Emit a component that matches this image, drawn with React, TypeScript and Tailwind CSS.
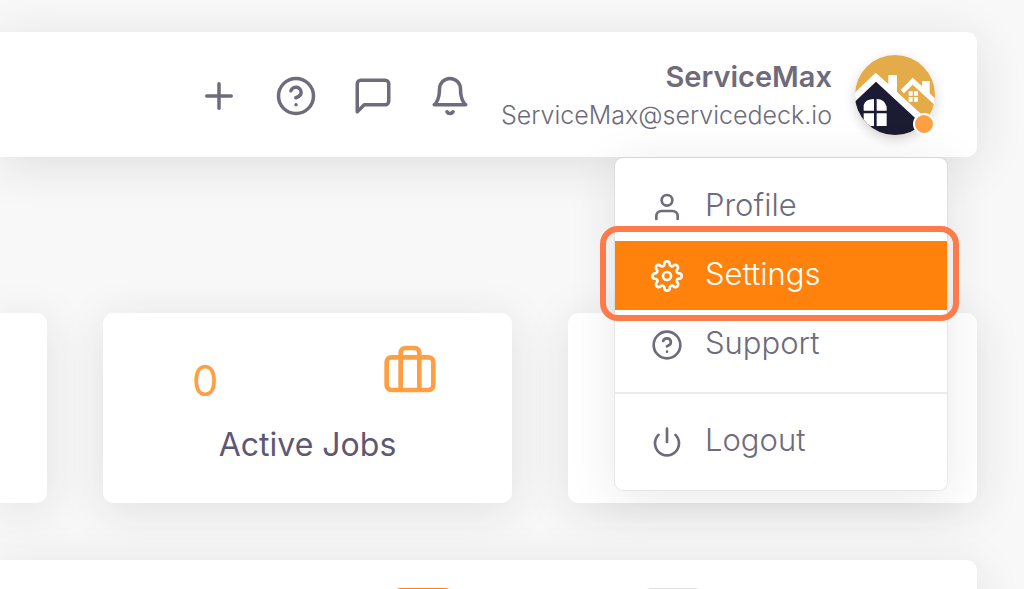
import type { ReactNode } from "react";
import type { IconType } from "react-icons";
import {
  FiBell,
  FiBriefcase,
  FiHelpCircle,
  FiMessageSquare,
  FiPlus,
  FiPower,
  FiSettings,
  FiUser,
} from "react-icons/fi";

const actions: { label: string; icon: IconType }[] = [
  { label: "Add", icon: FiPlus },
  { label: "Help", icon: FiHelpCircle },
  { label: "Messages", icon: FiMessageSquare },
  { label: "Notifications", icon: FiBell },
];

function Avatar() {
  return (
    <span className="relative block size-20 shrink-0 rounded-full shadow-[0_4px_12px_rgba(0,0,0,0.18)]">
      <svg viewBox="45 45 240 240" className="size-20" aria-hidden="true">
        <defs>
          <clipPath id="avatar-clip">
            <circle cx="165" cy="165" r="120" />
          </clipPath>
        </defs>
        <g clipPath="url(#avatar-clip)">
          <rect x="45" y="45" width="240" height="240" fill="#e4ab49" />
          <path
            d="M182 150 L218 113 L246 139 V123 H269 V160 L290 180 V200 L218 134 L192 160 Z"
            fill="#fff"
          />
          <path d="M206 154H218V167H206Z M222 154H234V167H222Z M206 171H218V185H206Z M222 171H234V185H222Z" fill="#fff" />
          <path
            d="M35 167 L107 98 L145 132 V105 H171 V156 L250 228 V262 H222 L108 126 L35 198 Z"
            fill="#fff"
          />
          <path d="M108 125 L35 194 V290 H232 V240 Z" fill="#1b1b33" />
          <path
            d="M71 212 V196 Q76 177 102 177 V212 Z M110 177 Q134 178 140 200 V212 H110 Z M71 220 H102 V258 H71 Z M110 220 H140 V258 H110 Z"
            fill="#fff"
          />
        </g>
      </svg>
      <span className="absolute right-0 bottom-0 size-[22px] rounded-full border-2 border-white bg-[#ff9f43]" />
    </span>
  );
}

function MenuItem({ icon: Icon, label, active = false }: { icon: IconType; label: string; active?: boolean }) {
  return (
    <li className="relative">
      <a
        href="#"
        className={
          active
            ? "flex h-[69px] items-center gap-[22px] bg-[#ff820c] px-9 text-white"
            : "flex h-[69px] items-center gap-[22px] px-9 text-[#6e6b7b]"
        }
      >
        <Icon className="size-8 shrink-0" />
        <span className="pb-1 text-[31px] leading-8 font-light">{label}</span>
      </a>
      {active && (
        <span className="pointer-events-none absolute -top-[15px] -right-3 -bottom-[11px] -left-[15px] rounded-[18px] border-[6px] border-[#fd7a4a]" />
      )}
    </li>
  );
}

function Card({ children }: { children?: ReactNode }) {
  return (
    <section className="h-[190px] rounded-[10px] bg-white shadow-[0_8px_48px_rgba(38,38,42,0.11)]">
      {children}
    </section>
  );
}

export default function App() {
  return (
    <div className="h-screen overflow-hidden bg-[#f8f8f8] pt-8 font-['Inter','Liberation_Sans',sans-serif]">
      <header className="relative z-10 mr-[47px] flex h-[125px] items-center justify-end rounded-r-[10px] bg-white pr-[42px] shadow-[0_8px_48px_rgba(38,38,42,0.12)]">
        <nav className="mr-[30px] flex gap-[35px] pt-0.5 text-[#6e6b7b]">
          {actions.map(({ label, icon: Icon }) => (
            <button key={label} type="button" aria-label={label}>
              <Icon className="size-[42px]" />
            </button>
          ))}
        </nav>
        <button type="button" className="flex items-center gap-[23px] text-right text-[#6e6b7b]">
          <span className="flex flex-col gap-1">
            <span className="text-[29px] leading-9 font-semibold">ServiceMax</span>
            <span className="text-[25px] leading-8 font-light">ServiceMax@servicedeck.io</span>
          </span>
          <Avatar />
        </button>
        <ul className="absolute top-[126px] right-[30px] w-[332px] rounded-lg bg-white py-3.5 shadow-[0_0_0_1px_rgba(38,38,42,0.06),0_8px_48px_rgba(38,38,42,0.1)]">
          <MenuItem icon={FiUser} label="Profile" />
          <MenuItem icon={FiSettings} label="Settings" active />
          <MenuItem icon={FiHelpCircle} label="Support" />
          <li role="separator" className="my-[13px] border-t-2 border-[#ebebed]" />
          <MenuItem icon={FiPower} label="Logout" />
        </ul>
      </header>

      <main className="mt-[156px]">
        <div className="mr-[47px] grid grid-cols-[47px_1fr_1fr] gap-14">
          <section className="rounded-r-[10px] bg-white shadow-[0_8px_48px_rgba(38,38,42,0.11)]" />
          <Card>
            <div className="grid grid-cols-2 justify-items-center pt-7">
              <span className="pt-3 text-[42px] leading-[56px] text-[#ff9f43]">0</span>
              <FiBriefcase className="size-14 text-[#ff9f43]" />
            </div>
            <h2 className="pt-4 text-center text-[32px] leading-10 text-[#5e5873]">Active Jobs</h2>
          </Card>
          <Card />
        </div>
        <section className="mt-[57px] mr-[47px] flex h-24 gap-[190px] rounded-tr-[10px] bg-white pt-7 pl-[393px] shadow-[0_8px_48px_rgba(38,38,42,0.11)]">
          <span className="h-16 w-[60px] rounded-lg bg-[#ff820c]" />
          <span className="h-16 w-[60px] rounded-lg bg-[#e2e2e4]" />
        </section>
      </main>
    </div>
  );
}
